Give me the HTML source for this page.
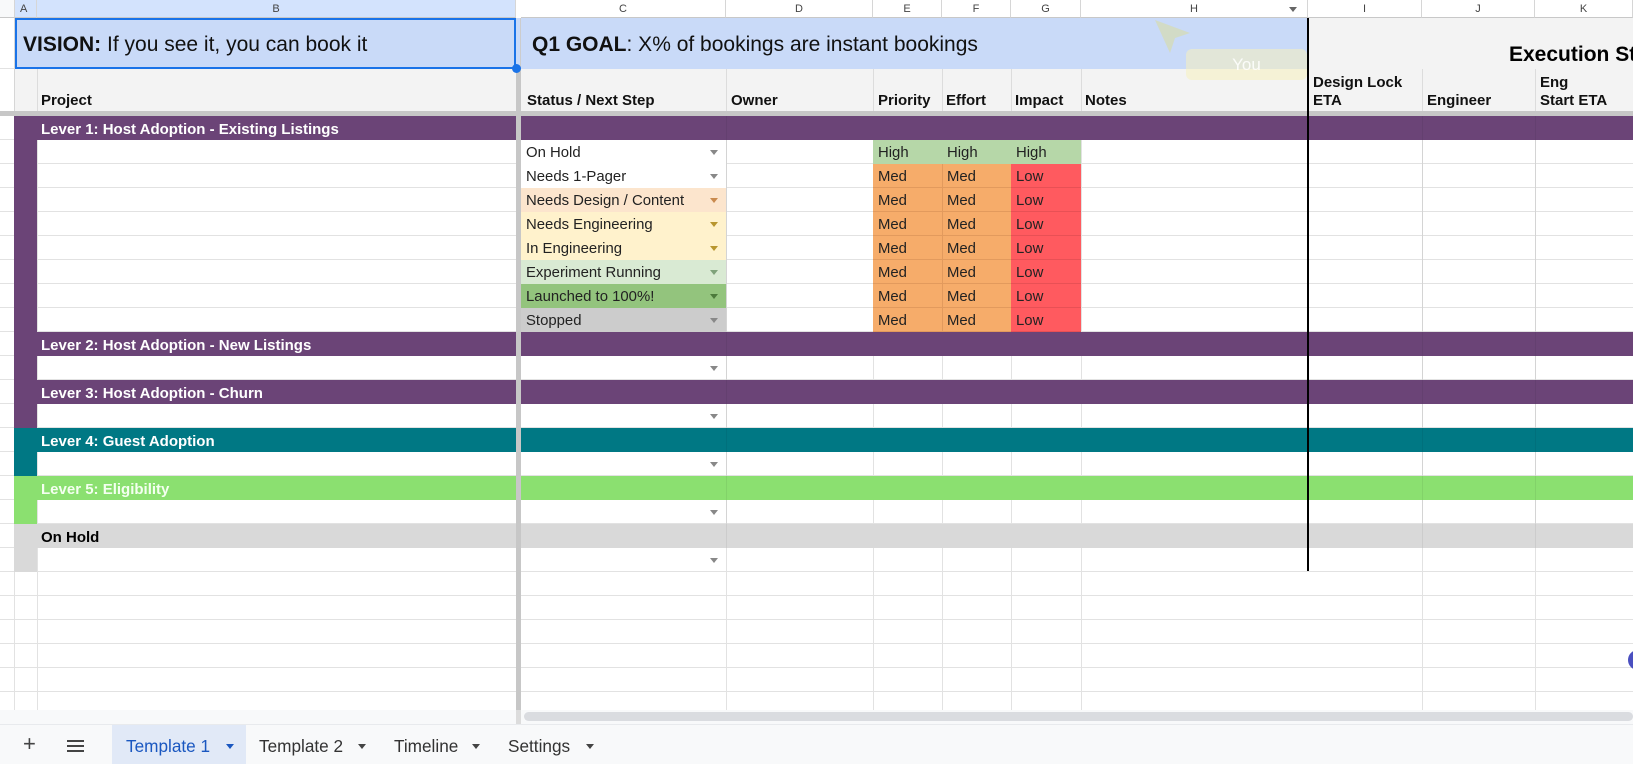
<!DOCTYPE html>
<html><head><meta charset="utf-8">
<style>
*{margin:0;padding:0;box-sizing:border-box}
body{width:1633px;height:764px;overflow:hidden;background:#fff;font-family:"Liberation Sans",Arial,sans-serif;position:relative}
.a{position:absolute}
.vl{position:absolute;width:1px;background:#e2e2e2}
.ch{position:absolute;top:0;height:18px;font-size:11px;color:#444;text-align:center;line-height:18px;border-right:1px solid #d6d6d6;border-bottom:1px solid #c8c8c8;background:#fff}
.band{position:absolute;left:14px;width:1619px;height:24px}
.lt{position:absolute;left:41px;font-size:15px;font-weight:bold;color:#fff;line-height:27px;white-space:nowrap}
.c{position:absolute;height:24px;font-size:14.9px;line-height:27px;padding-left:5px;color:#222;white-space:nowrap}
.arr{position:absolute;width:0;height:0;border-left:4.5px solid transparent;border-right:4.5px solid transparent;border-top:5px solid #888}
.h2{position:absolute;font-size:15px;font-weight:bold;color:#111;line-height:18px;white-space:nowrap}
.tab{position:absolute;top:736px;font-size:17.2px;color:#333}
</style></head><body>

<div class="a" style="left:0;top:116px;width:1633px;height:594px;background:repeating-linear-gradient(to bottom,transparent 0,transparent 23px,#e2e2e2 23px,#e2e2e2 24px)"></div>

<div class="vl" style="left:14px;top:18px;height:692px"></div>
<div class="vl" style="left:37px;top:69px;height:641px"></div>
<div class="vl" style="left:726px;top:69px;height:641px"></div>
<div class="vl" style="left:873px;top:69px;height:641px"></div>
<div class="vl" style="left:942px;top:69px;height:641px"></div>
<div class="vl" style="left:1011px;top:69px;height:641px"></div>
<div class="vl" style="left:1081px;top:69px;height:641px"></div>
<div class="vl" style="left:1422px;top:69px;height:641px"></div>
<div class="vl" style="left:1535px;top:18px;height:692px"></div>

<div class="ch" style="left:0;width:15px;background:#f8f9fa"></div>
<div class="ch" style="left:15px;width:22px;background:#d3e3fd;text-align:left;padding-left:5px">A</div>
<div class="ch" style="left:37px;width:479px;background:#d3e3fd">B</div>
<div class="ch" style="left:521px;width:205px">C</div>
<div class="ch" style="left:726px;width:147px">D</div>
<div class="ch" style="left:873px;width:69px">E</div>
<div class="ch" style="left:942px;width:69px">F</div>
<div class="ch" style="left:1011px;width:70px">G</div>
<div class="ch" style="left:1081px;width:227px">H<span class="arr" style="right:10px;top:7px;border-top-color:#666"></span></div>
<div class="ch" style="left:1308px;width:114px">I</div>
<div class="ch" style="left:1422px;width:113px">J</div>
<div class="ch" style="left:1535px;width:98px">K</div>

<div class="a" style="left:0;top:18px;width:15px;height:51px;border-bottom:1px solid #e2e2e2;border-right:1px solid #d6d6d6;background:#fff"></div>
<div class="a" style="left:15px;top:18px;width:501px;height:51px;background:#c9daf8;border:2px solid #1a73e8"></div>
<div class="a" style="left:23px;top:33px;font-size:21px;color:#111;white-space:nowrap"><b>VISION:</b> If you see it, you can book it</div>
<div class="a" style="left:512px;top:64px;width:9px;height:9px;border-radius:50%;background:#1a73e8;z-index:5"></div>
<div class="a" style="left:521px;top:18px;width:787px;height:51px;background:#c9daf8"></div>
<div class="a" style="left:532px;top:33px;font-size:21px;color:#111;white-space:nowrap"><b>Q1 GOAL</b>: X% of bookings are instant bookings</div>
<div class="a" style="left:1308px;top:18px;width:325px;height:51px;background:#f3f3f3;overflow:hidden"><div class="a" style="left:201px;top:25px;font-size:21px;font-weight:bold;color:#000;white-space:nowrap">Execution Status</div></div>

<div class="a" style="left:0;top:69px;width:15px;height:42px;border-right:1px solid #d6d6d6"></div>
<div class="a" style="left:15px;top:69px;width:501px;height:42px;background:#f3f3f3"></div>
<div class="a" style="left:521px;top:69px;width:1112px;height:42px;background:#f3f3f3"></div>
<div class="vl" style="left:37px;top:69px;height:42px;background:#dcdcdc"></div>
<div class="vl" style="left:726px;top:69px;height:42px;background:#dcdcdc"></div>
<div class="vl" style="left:873px;top:69px;height:42px;background:#dcdcdc"></div>
<div class="vl" style="left:942px;top:69px;height:42px;background:#dcdcdc"></div>
<div class="vl" style="left:1011px;top:69px;height:42px;background:#dcdcdc"></div>
<div class="vl" style="left:1081px;top:69px;height:42px;background:#dcdcdc"></div>
<div class="vl" style="left:1422px;top:69px;height:42px;background:#dcdcdc"></div>
<div class="vl" style="left:1535px;top:69px;height:42px;background:#dcdcdc"></div>
<div class="h2" style="left:41px;top:92px">Project</div>
<div class="h2" style="left:527px;top:92px">Status / Next Step</div>
<div class="h2" style="left:731px;top:92px">Owner</div>
<div class="h2" style="left:878px;top:92px">Priority</div>
<div class="h2" style="left:946px;top:92px">Effort</div>
<div class="h2" style="left:1015px;top:92px">Impact</div>
<div class="h2" style="left:1085px;top:92px">Notes</div>
<div class="h2" style="left:1313px;top:74px">Design Lock<br>ETA</div>
<div class="h2" style="left:1427px;top:92px">Engineer</div>
<div class="h2" style="left:1540px;top:74px">Eng<br>Start ETA</div>

<svg class="a" style="left:1150px;top:18px;z-index:6" width="45" height="40"><polygon points="5,2 40,15 25,20 20,35" fill="#d6dcb0" opacity="0.7"/></svg>
<div class="a" style="left:1186px;top:49px;width:121px;height:31px;border-radius:6px;background:rgba(245,240,190,0.55);color:rgba(255,255,255,0.85);font-size:17px;text-align:center;line-height:31px;z-index:6">You</div>

<div class="a" style="left:0;top:111px;width:1633px;height:5px;background:#c7c7c7"></div>

<div class="a" style="left:14px;top:116px;width:23px;height:312px;background:#6b4477"></div>
<div class="a" style="left:14px;top:428px;width:23px;height:48px;background:#007884"></div>
<div class="a" style="left:14px;top:476px;width:23px;height:48px;background:#8be070"></div>
<div class="a" style="left:14px;top:524px;width:23px;height:48px;background:#d9d9d9"></div>

<div class="band" style="top:116px;background:#6b4477"></div><div class="lt" style="top:116px">Lever 1: Host Adoption - Existing Listings</div>
<div class="band" style="top:332px;background:#6b4477"></div><div class="lt" style="top:332px">Lever 2: Host Adoption - New Listings</div>
<div class="band" style="top:380px;background:#6b4477"></div><div class="lt" style="top:380px">Lever 3: Host Adoption - Churn</div>
<div class="band" style="top:428px;background:#007884"></div><div class="lt" style="top:428px">Lever 4: Guest Adoption</div>
<div class="band" style="top:476px;background:#8be070"></div><div class="lt" style="top:476px;color:#f4fff0">Lever 5: Eligibility</div>
<div class="band" style="top:524px;background:#d9d9d9"></div><div class="lt" style="top:524px;color:#000">On Hold</div>

<div class="c" style="left:521px;top:140px;width:205px;background:#fff">On Hold</div>
<div class="c" style="left:521px;top:164px;width:205px;background:#fff">Needs 1-Pager</div>
<div class="c" style="left:521px;top:188px;width:205px;background:#fce5cd">Needs Design / Content</div>
<div class="c" style="left:521px;top:212px;width:205px;background:#fff2cc">Needs Engineering</div>
<div class="c" style="left:521px;top:236px;width:205px;background:#fff2cc">In Engineering</div>
<div class="c" style="left:521px;top:260px;width:205px;background:#d9ead3">Experiment Running</div>
<div class="c" style="left:521px;top:284px;width:205px;background:#93c47d">Launched to 100%!</div>
<div class="c" style="left:521px;top:308px;width:205px;background:#cccccc">Stopped</div>
<div class="arr" style="left:710px;top:150px"></div>
<div class="arr" style="left:710px;top:174px"></div>
<div class="arr" style="left:710px;top:198px;border-top-color:#c98a4e"></div>
<div class="arr" style="left:710px;top:222px;border-top-color:#b8962f"></div>
<div class="arr" style="left:710px;top:246px;border-top-color:#b8962f"></div>
<div class="arr" style="left:710px;top:270px;border-top-color:#7fa27a"></div>
<div class="arr" style="left:710px;top:294px;border-top-color:#4c7a3b"></div>
<div class="arr" style="left:710px;top:318px"></div>
<div class="arr" style="left:710px;top:366px"></div>
<div class="arr" style="left:710px;top:414px"></div>
<div class="arr" style="left:710px;top:462px"></div>
<div class="arr" style="left:710px;top:510px"></div>
<div class="arr" style="left:710px;top:558px"></div>

<div class="c" style="left:873px;top:140px;width:69px;background:#b6d7a8">High</div>
<div class="c" style="left:942px;top:140px;width:69px;background:#b6d7a8">High</div>
<div class="c" style="left:1011px;top:140px;width:70px;background:#b6d7a8">High</div>
<div class="a" style="left:873px;top:164px;width:138px;height:168px;background:repeating-linear-gradient(to bottom,#f6ac6a 0,#f6ac6a 23px,#e29a5d 23px,#e29a5d 24px)"></div>
<div class="a" style="left:1011px;top:164px;width:70px;height:168px;background:repeating-linear-gradient(to bottom,#ff5a5f 0,#ff5a5f 23px,#e85055 23px,#e85055 24px)"></div>
<div class="vl" style="left:942px;top:164px;height:168px;background:#e29a5d"></div>
<div class="c" style="left:873px;top:164px">Med</div><div class="c" style="left:942px;top:164px">Med</div><div class="c" style="left:1011px;top:164px">Low</div>
<div class="c" style="left:873px;top:188px">Med</div><div class="c" style="left:942px;top:188px">Med</div><div class="c" style="left:1011px;top:188px">Low</div>
<div class="c" style="left:873px;top:212px">Med</div><div class="c" style="left:942px;top:212px">Med</div><div class="c" style="left:1011px;top:212px">Low</div>
<div class="c" style="left:873px;top:236px">Med</div><div class="c" style="left:942px;top:236px">Med</div><div class="c" style="left:1011px;top:236px">Low</div>
<div class="c" style="left:873px;top:260px">Med</div><div class="c" style="left:942px;top:260px">Med</div><div class="c" style="left:1011px;top:260px">Low</div>
<div class="c" style="left:873px;top:284px">Med</div><div class="c" style="left:942px;top:284px">Med</div><div class="c" style="left:1011px;top:284px">Low</div>
<div class="c" style="left:873px;top:308px">Med</div><div class="c" style="left:942px;top:308px">Med</div><div class="c" style="left:1011px;top:308px">Low</div>

<div class="a" style="left:726px;top:116px;width:1px;height:432px;background:rgba(0,0,0,0.06)"></div>
<div class="a" style="left:1422px;top:116px;width:1px;height:432px;background:rgba(0,0,0,0.06)"></div>
<div class="a" style="left:1535px;top:116px;width:1px;height:432px;background:rgba(0,0,0,0.06)"></div>

<div class="a" style="left:516px;top:18px;width:5px;height:706px;background:#c7c7c7"></div>
<div class="a" style="left:516px;top:18px;width:5px;height:51px;background:#c9daf8;border-right:1px solid #ccc"></div>

<div class="a" style="left:1307px;top:18px;width:2px;height:553px;background:#000"></div>

<div class="a" style="left:1628px;top:650px;width:20px;height:20px;border-radius:50%;background:#4a4fc0"></div>

<div class="a" style="left:0;top:710px;width:1633px;height:14px;background:#f8f9fa"></div>
<div class="a" style="left:516px;top:710px;width:5px;height:14px;background:#dcdcdc"></div>
<div class="a" style="left:524px;top:712px;width:1109px;height:9px;border-radius:5px;background:#dadce0"></div>

<div class="a" style="left:0;top:724px;width:1633px;height:40px;background:#f8f9fa;border-top:1px solid #e8eaed"></div>
<div class="a" style="left:23px;top:731px;font-size:22px;color:#444">+</div>
<div class="a" style="left:67px;top:740px;width:17px;height:2px;background:#444;box-shadow:0 5px 0 #444,0 10px 0 #444"></div>
<div class="a" style="left:112px;top:725px;width:134px;height:39px;background:#e1e9f7"></div>
<div class="tab" style="left:126px;color:#1a57c0">Template 1</div>
<div class="arr" style="left:226px;top:744px;border-top-color:#1a57c0"></div>
<div class="tab" style="left:259px">Template 2</div>
<div class="arr" style="left:358px;top:744px;border-top-color:#444"></div>
<div class="tab" style="left:394px">Timeline</div>
<div class="arr" style="left:472px;top:744px;border-top-color:#444"></div>
<div class="tab" style="left:508px">Settings</div>
<div class="arr" style="left:586px;top:744px;border-top-color:#444"></div>

</body></html>
